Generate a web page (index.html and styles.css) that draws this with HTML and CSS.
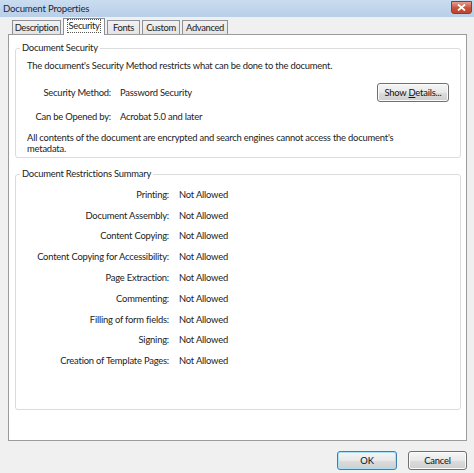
FILE: index.html
```
<!DOCTYPE html>
<html>
<head>
<meta charset="utf-8">
<link rel="stylesheet" href="styles.css">
</head>
<body>
<div class="dialog">
  <div class="titlebar">
    <span class="title">Document Properties</span>
    <span class="close"><svg width="9" height="7" viewBox="0 0 9 7"><path d="M1 0.5 L8 6.5 M8 0.5 L1 6.5" stroke="#fff" stroke-width="1.8"/></svg></span>
  </div>
  <div class="tabs">
    <div class="tab t-desc">Description</div>
    <div class="tab t-sec active"><span class="focus">Security</span></div>
    <div class="tab t-fonts">Fonts</div>
    <div class="tab t-custom">Custom</div>
    <div class="tab t-adv">Advanced</div>
  </div>
  <div class="panel">
    <fieldset class="group sec">
      <legend>Document Security</legend>
      <p class="intro">The document's Security Method restricts what can be done to the document.</p>
      <div class="secrow">
        <span class="lbl1">Security Method:</span>
        <span class="val">Password Security</span>
        <button class="btn details">Show <u>D</u>etails...</button>
      </div>
      <div class="secrow second">
        <span class="lbl1">Can be Opened by:</span>
        <span class="val">Acrobat 5.0 and later</span>
      </div>
      <p class="note">All contents of the document are encrypted and search engines cannot access the document's metadata.</p>
    </fieldset>
    <fieldset class="group restr">
      <legend>Document Restrictions Summary</legend>
      <div class="grid">
        <span class="lbl2">Printing:</span><span>Not Allowed</span>
        <span class="lbl2">Document Assembly:</span><span>Not Allowed</span>
        <span class="lbl2">Content Copying:</span><span>Not Allowed</span>
        <span class="lbl2">Content Copying for Accessibility:</span><span>Not Allowed</span>
        <span class="lbl2">Page Extraction:</span><span>Not Allowed</span>
        <span class="lbl2">Commenting:</span><span>Not Allowed</span>
        <span class="lbl2">Filling of form fields:</span><span>Not Allowed</span>
        <span class="lbl2">Signing:</span><span>Not Allowed</span>
        <span class="lbl2">Creation of Template Pages:</span><span>Not Allowed</span>
      </div>
    </fieldset>
  </div>
  <div class="footer">
    <button class="btn ok">OK</button>
    <button class="btn cancel">Cancel</button>
  </div>
</div>
</body>
</html>
```
FILE: styles.css
```
* { box-sizing: border-box; }
html, body { margin: 0; padding: 0; }
body {
  width: 474px;
  height: 473px;
  overflow: hidden;
  background: #f0f0f0;
  font-family: Lato, "Open Sans", sans-serif;
  font-size: 9.4px;
  letter-spacing: -0.2px;
  color: #222;
}
.dialog { width: 474px; height: 473px; display: flex; flex-direction: column; }
.titlebar {
  height: 17px;
  background: linear-gradient(#c9dcf0, #b9cfe8);
  display: flex;
  align-items: center;
  justify-content: space-between;
  padding: 0 2px 0 3px;
}
.title { font-size: 9.6px; color: #1a2a40; }
.close {
  width: 21px;
  height: 13px;
  margin-top: -3px;
  border: 1px solid #8e3a2f;
  border-radius: 0 0 3px 3px;
  background: linear-gradient(#e4a090, #c8503a 55%, #c0452f);
  display: flex;
  align-items: center;
  justify-content: center;
}
.close svg { display: block; }
.tabs {
  display: flex;
  align-items: flex-end;
  padding-left: 12px;
  margin-top: 2px;
  height: 15px;
  position: relative;
  z-index: 1;
  white-space: nowrap;
  letter-spacing: -0.35px;
}
.tab {
  height: 14px;
  border: 1px solid #8c8f96;
  border-bottom: none;
  background: linear-gradient(#f2f2f2, #e4e4e4);
  margin-right: 2px;
  display: flex;
  align-items: center;
  justify-content: center;
  line-height: 1;
}
.t-desc { width: 49px; }
.t-sec { width: 42px; }
.t-fonts { width: 33px; }
.t-custom { width: 38px; }
.t-adv { width: 46px; }
.tab.active {
  background: #fff;
  margin-bottom: -1px;
  height: 17px;
}
.focus {
  border: 1px dotted #555;
  padding: 1px 1px;
  margin-top: -2px;
}
.panel {
  margin: 0 7px 0 8px;
  height: 407px;
  background: #fff;
  border: 1px solid #9b9b9b;
  padding: 7px 5px 0 6px;
  display: flex;
  flex-direction: column;
}
.group {
  margin: 0;
  border: 1px solid #dcdcdc;
  border-radius: 3px;
  padding: 0 10px 0 11px;
  min-width: 0;
}
legend {
  padding: 0 2px;
  margin-left: -7px;
  line-height: 12px;
}
.sec { height: 116px; padding-top: 6px; }
.intro { margin: 0; line-height: 12px; }
.secrow {
  display: flex;
  align-items: center;
  height: 18px;
  margin-top: 11px;
}
.secrow.second { margin-top: 6px; }
.lbl1 { flex: 0 0 84px; text-align: right; margin-right: 9px; }
.val { flex: 1; }
.note { margin: 7px 0 0; line-height: 11px; max-width: 375px; }
.btn {
  font-family: inherit;
  font-size: 9.4px;
  letter-spacing: -0.2px;
  color: #111;
  height: 19px;
  border: 1px solid #707070;
  border-radius: 3px;
  background: linear-gradient(#f6f6f6, #e8e8e8 50%, #dcdcdc 51%, #cfcfcf);
  padding: 0;
  box-shadow: inset 0 0 0 1px #fbfbfb;
}
.details { width: 72px; margin-right: 1px; }
.restr { margin-top: 10px; height: 242px; padding-top: 4px; }
.grid {
  display: grid;
  grid-template-columns: 142px auto;
  column-gap: 10px;
  grid-auto-rows: 20.8px;
  align-items: center;
  white-space: nowrap;
}
.lbl2 { text-align: right; }
.footer {
  display: flex;
  justify-content: flex-end;
  gap: 11px;
  padding: 10px 7px 0 0;
}
.ok {
  width: 60px;
  border-color: #3c7fb1;
  box-shadow: inset 0 0 0 1px #a8e0f6;
}
.cancel { width: 59px; }
```
